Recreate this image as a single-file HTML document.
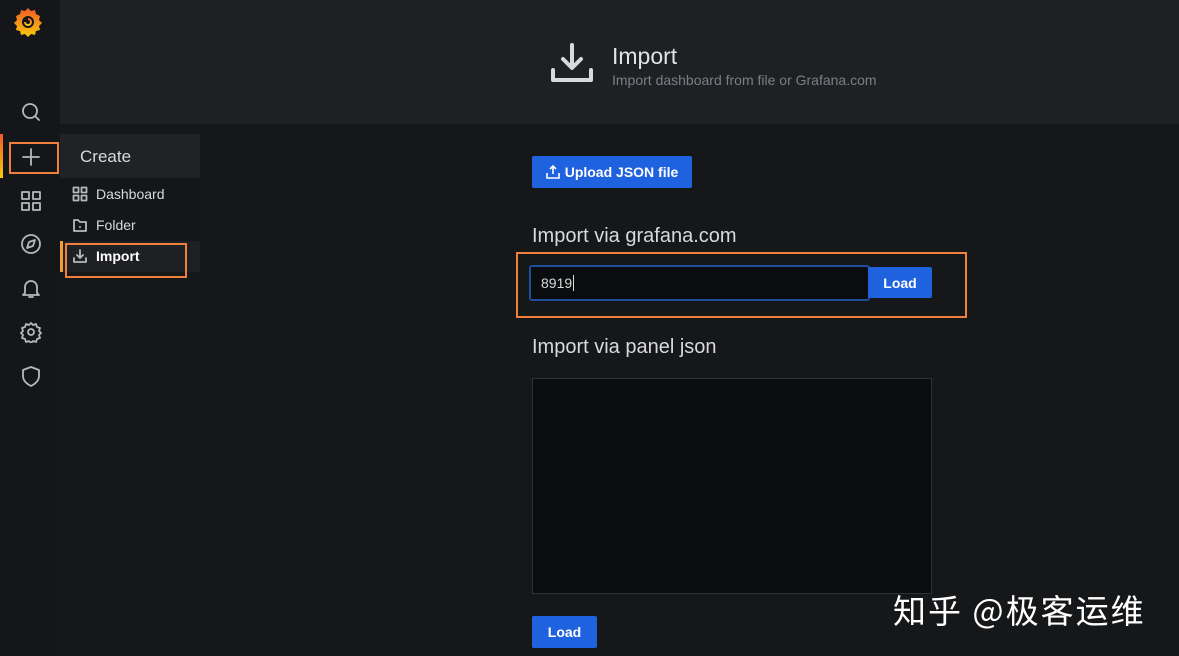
<!DOCTYPE html>
<html><head><meta charset="utf-8"><style>
*{margin:0;padding:0;box-sizing:border-box}
body{width:1179px;height:656px;overflow:hidden;background:#161719;font-family:"Liberation Sans","Noto Sans CJK SC",sans-serif;position:relative;color:#d8d9da}
.abs{position:absolute}
.side{left:0;top:0;width:60px;height:656px;background:#141619}
.hdr{left:60px;top:0;width:1119px;height:124px;background:#1f2024}
.btn{background:#1f62e0;color:#fff;font-weight:bold;font-size:14px;border-radius:2px;display:flex;align-items:center;justify-content:center}
svg{position:absolute}
.ic{stroke:#b7b8bd;fill:none;stroke-width:1.8;stroke-linecap:round;stroke-linejoin:round}
.ob{border:2px solid #f0803a;position:absolute}
</style></head><body>
<div class="abs side"></div>
<div class="abs hdr"></div>
<svg style="left:12px;top:5px" width="32" height="34" viewBox="0 0 32 34"><defs><linearGradient id="g" x1="0" y1="1" x2="0" y2="0"><stop offset="0" stop-color="#fbca0a"/><stop offset="1" stop-color="#f05a28"/></linearGradient></defs><path d="M16 3l3 3 4-1 1 4 4 2-1 4 3 3-3 3 1 4-4 1-1 4-4-1-3 3-3-3-4 1-1-4-4-1 1-4-3-3 3-3-1-4 4-2 1-4 4 1z" fill="url(#g)"/><circle cx="16" cy="17" r="6" fill="#141619"/><path d="M16 14a3 3 0 1 1-3 3" stroke="url(#g)" stroke-width="2" fill="none"/></svg>
<svg style="left:20px;top:101px" width="22" height="22" class="ic"><circle cx="10" cy="10" r="7" class="ic"/><path d="M15 15l4 4" class="ic"/></svg>
<div class="abs" style="left:0;top:134px;width:3px;height:44px;background:linear-gradient(#f05a28,#fbca0a)"></div>
<div class="ob" style="left:9px;top:142px;width:50px;height:32px"></div>
<svg style="left:20px;top:146px" width="22" height="22"><path d="M11 3v16M3 11h16" class="ic"/></svg>
<svg style="left:20px;top:190px" width="22" height="22"><rect x="2" y="2" width="7" height="7" class="ic"/><rect x="13" y="2" width="7" height="7" class="ic"/><rect x="2" y="13" width="7" height="7" class="ic"/><rect x="13" y="13" width="7" height="7" class="ic"/></svg>
<svg style="left:20px;top:233px" width="22" height="22"><circle cx="11" cy="11" r="9" class="ic"/><path d="M15 7l-2 6-6 2 2-6z" class="ic"/></svg>
<svg style="left:20px;top:277px" width="22" height="22"><path d="M5 16V10a6 6 0 0 1 12 0v6l2 2H3zM9 20h4" class="ic"/></svg>
<svg style="left:20px;top:321px" width="22" height="22"><circle cx="11" cy="11" r="3" class="ic"/><path d="M11 2l2 2 3-1 1 3 3 1-1 3 2 2-2 2 1 3-3 1-1 3-3-1-2 2-2-2-3 1-1-3-3-1 1-3-2-2 2-2-1-3 3-1 1-3 3 1z" class="ic"/></svg>
<svg style="left:20px;top:365px" width="22" height="22"><path d="M11 2l8 3v6c0 5-4 8-8 10-4-2-8-5-8-10V5z" class="ic"/></svg>
<div class="abs" style="left:60px;top:134px;width:140px;height:44px;background:#202226"></div>
<div class="abs" style="left:80px;top:147px;font-size:17px;color:#d8d9da">Create</div>
<div class="abs" style="left:60px;top:178px;width:140px;height:94px;background:#141619"></div>
<div class="abs" style="left:60px;top:241px;width:140px;height:31px;background:#1e2024"></div>
<div class="abs" style="left:60px;top:241px;width:3px;height:31px;background:#f0a030"></div>
<svg style="left:72px;top:186px" width="16" height="16"><rect x="1.5" y="1.5" width="5" height="5" class="ic" stroke-width="1.4"/><rect x="9.5" y="1.5" width="5" height="5" class="ic" stroke-width="1.4"/><rect x="1.5" y="9.5" width="5" height="5" class="ic" stroke-width="1.4"/><rect x="9.5" y="9.5" width="5" height="5" class="ic" stroke-width="1.4"/></svg>
<div class="abs" style="left:96px;top:186px;font-size:14px">Dashboard</div>
<svg style="left:72px;top:217px" width="16" height="16"><path d="M2 3h4l2 2h6v9H2z" class="ic" stroke-width="1.4"/><circle cx="8" cy="10" r="1" fill="#b7b8bd"/></svg>
<div class="abs" style="left:96px;top:217px;font-size:14px">Folder</div>
<svg style="left:72px;top:248px" width="16" height="16"><path d="M8 2v8M5 7l3 3 3-3M2 10v4h12v-4" class="ic" stroke-width="1.5"/></svg>
<div class="abs" style="left:96px;top:248px;font-size:14px;color:#fff;font-weight:bold">Import</div>
<div class="ob" style="left:65px;top:243px;width:122px;height:35px"></div>
<svg style="left:550px;top:42px" width="44" height="44"><path d="M22 3v22M13 17l9 9 9-9M3 28v10h38V28" stroke="#d8d9da" stroke-width="4" fill="none" stroke-linecap="round" stroke-linejoin="round"/></svg>
<div class="abs" style="left:612px;top:43px;font-size:23px;color:#e2e3e5">Import</div>
<div class="abs" style="left:612px;top:72px;font-size:14px;color:#7b7f85">Import dashboard from file or Grafana.com</div>
<div class="abs btn" style="left:532px;top:156px;width:160px;height:32px">
<svg style="position:relative;margin-right:5px" width="14" height="14"><path d="M7 1v8M4 4l3-3 3 3M1 8v5h12V8" stroke="#fff" stroke-width="1.6" fill="none"/></svg>Upload JSON file</div>
<div class="abs" style="left:532px;top:225px;font-size:20px;color:#d8d9da">Import via grafana.com</div>
<div class="abs" style="left:529px;top:265px;width:341px;height:36px;border:2px solid #1f4d99;border-radius:3px;background:#0b0c0e"></div>
<div class="abs" style="left:541px;top:275px;font-size:14px;color:#d8d9da">8919<span style="border-left:1px solid #ddd;margin-left:1px"></span></div>
<div class="abs btn" style="left:868px;top:267px;width:64px;height:31px">Load</div>
<div class="ob" style="left:516px;top:252px;width:451px;height:66px"></div>
<div class="abs" style="left:532px;top:336px;font-size:20px;color:#d8d9da">Import via panel json</div>
<div class="abs" style="left:532px;top:378px;width:400px;height:216px;background:#0b0c0e;border:1px solid #2c3235"></div>
<div class="abs btn" style="left:532px;top:616px;width:65px;height:32px">Load</div>
<div class="abs" style="left:893px;top:585px;font-size:33px;letter-spacing:2px;color:#fff;font-family:'Noto Sans CJK SC',sans-serif;white-space:nowrap">知乎 @极客运维</div>
</body></html>
